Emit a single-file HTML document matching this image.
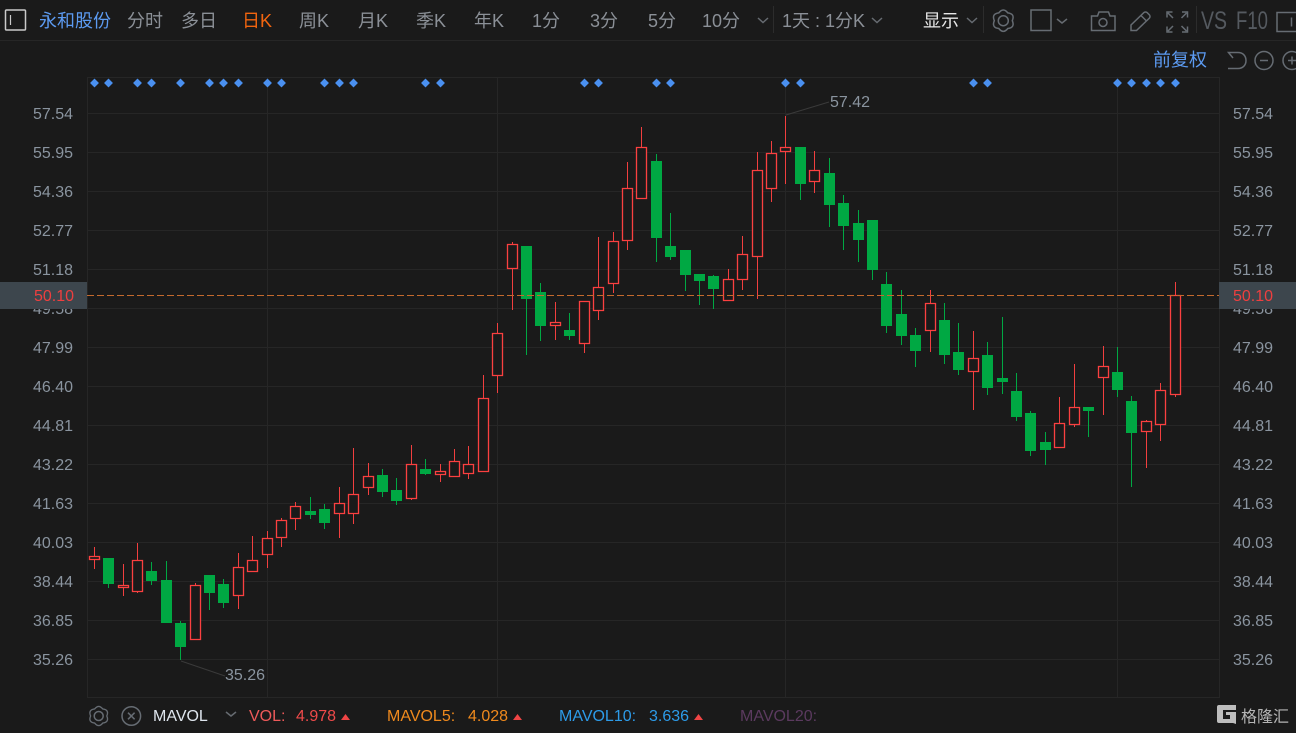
<!DOCTYPE html>
<html lang="zh"><head><meta charset="utf-8"><title>永和股份</title>
<style>
html,body{margin:0;padding:0;background:#1a1a1a;width:1296px;height:733px;overflow:hidden}
svg{display:block;position:absolute;left:0;top:0}
text{font-family:"Liberation Sans","Noto Sans CJK SC",sans-serif}
.a text{font-size:16px;fill:#8a949f}
.t text{font-size:18px;fill:#8b9097}
.s{fill:none;stroke:#666c73;stroke-width:1.5}
</style></head><body>
<svg width="1296" height="733" viewBox="0 0 1296 733">
<rect width="1296" height="733" fill="#1a1a1a"/>
<g shape-rendering="crispEdges" stroke="#262626" fill="none">
<path d="M0 40.500H1296"/>
<path d="M87 77.500H1220M87 697.500H1220M87.500 77V698M1219.500 77V698M267.500 77V698M497.500 77V698M785.500 77V698M1117.500 77V698"/>
<path d="M87 113.500H1220M87 152.500H1220M87 191.500H1220M87 230.500H1220M87 269.500H1220M87 308.500H1220M87 347.500H1220M87 386.500H1220M87 425.500H1220M87 464.500H1220M87 503.500H1220M87 542.500H1220M87 581.500H1220M87 620.500H1220M87 659.500H1220"/>
</g>
<g class="t">
<text x="39" y="27" style="fill:#5c9bf2">永和股份</text>
<text x="127" y="27">分时</text><text x="181" y="27">多日</text>
<text x="242" y="27" style="fill:#f2650f">日K</text>
<text x="299" y="27">周K</text><text x="358" y="27">月K</text><text x="416" y="27">季K</text><text x="474" y="27">年K</text>
<text x="532" y="27">1分</text><text x="590" y="27">3分</text><text x="648" y="27">5分</text><text x="702" y="27">10分</text>
<text x="782" y="27">1天 : 1分K</text>
<text x="923" y="27" style="fill:#e6e6e6">显示</text>
<text x="1153" y="66" style="fill:#5c9bf2">前复权</text>
<text x="1201" y="29" style="fill:#555a60;font-size:25px" textLength="26" lengthAdjust="spacingAndGlyphs">VS</text>
<text x="1236" y="29" style="fill:#555a60;font-size:25px" textLength="32" lengthAdjust="spacingAndGlyphs">F10</text>
</g>
<!-- toolbar icons -->
<rect x="5.500" y="10" width="20" height="20" rx="1" fill="none" stroke="#c9c9c9" stroke-width="1.500"/>
<path d="M10.500 15V25" stroke="#c9c9c9" stroke-width="1.200"/>
<path d="M758 18l5 4.500 5-4.500M872 18l5 4.500 5-4.500M967 18l5 4.500 5-4.500M1057 19l5 4 5-4M226 712l5 4 5-4" fill="none" stroke="#666b71" stroke-width="1.500"/>
<path d="M773.500 6V33M983.500 6V33M1196.500 6V33" stroke="#2c2c2c" shape-rendering="crispEdges"/>
<path class="s" d="M998.800 12.900Q1003.300 7.200 1007.800 12.900Q1015.200 13.800 1012.300 20.700Q1015.200 27.600 1007.800 28.500Q1003.300 34.200 998.800 28.500Q991.400 27.600 994.300 20.700Q991.400 13.800 998.800 12.900Z"/>
<circle class="s" cx="1003.300" cy="20.700" r="5"/>
<rect x="1031" y="10" width="20" height="20.500" class="s"/>
<path class="s" d="M1091.500 16h6l1.500-4h9.500l1.500 4h5v14.500h-23.500z"/>
<circle class="s" cx="1103" cy="22.500" r="4"/>
<path class="s" d="M1131 25L1144 12.500q1.500-1 3 0l2.500 2.500q1 1.500 0 3L1136.500 30.500h-5.500zM1141 15.500l5.500 5.500"/>
<path class="s" d="M1167 17.500v-5.500h5.500M1182 12h5.500v5.500M1167 26.500v5.500h5.500M1182 32h5.500v-5.500M1168 13l5 5M1186.500 13l-5 5M1168 31l5-5M1186.500 31l-5-5"/>
<rect x="1277" y="12.500" width="22" height="19" class="s"/>
<path d="M1291.500 17.500v9" class="s"/>
<path class="s" d="M1233 58L1228.500 52.500H1238C1243 52.500 1246 56 1246 60.500C1246 65 1243 68.500 1238 68.500H1228"/>
<circle class="s" cx="1264" cy="60.500" r="9"/><path class="s" d="M1260 60.500h8"/>
<circle class="s" cx="1292" cy="60.500" r="9"/><path class="s" d="M1288 60.500h8M1292 56.500v8"/>
<!-- diamonds -->
<g fill="#4a90f0" stroke="#4a90f0" stroke-width=".6" stroke-linejoin="round"><path d="M94.500 79l4 4-4 4-4-4zM108.500 79l4 4-4 4-4-4zM137.500 79l4 4-4 4-4-4zM151.500 79l4 4-4 4-4-4zM180.500 79l4 4-4 4-4-4zM209.500 79l4 4-4 4-4-4zM223.500 79l4 4-4 4-4-4zM238.500 79l4 4-4 4-4-4zM267.500 79l4 4-4 4-4-4zM281.500 79l4 4-4 4-4-4zM324.500 79l4 4-4 4-4-4zM339.500 79l4 4-4 4-4-4zM353.500 79l4 4-4 4-4-4zM425.500 79l4 4-4 4-4-4zM440.500 79l4 4-4 4-4-4zM584.500 79l4 4-4 4-4-4zM598.500 79l4 4-4 4-4-4zM656.500 79l4 4-4 4-4-4zM670.500 79l4 4-4 4-4-4zM785.500 79l4 4-4 4-4-4zM800.500 79l4 4-4 4-4-4zM973.500 79l4 4-4 4-4-4zM987.500 79l4 4-4 4-4-4zM1117.500 79l4 4-4 4-4-4zM1131.500 79l4 4-4 4-4-4zM1146.500 79l4 4-4 4-4-4zM1160.500 79l4 4-4 4-4-4zM1175.500 79l4 4-4 4-4-4z"/></g>
<!-- candles -->
<g shape-rendering="crispEdges">
<path stroke="#00a843" fill="none" d="M108.500 558V588M151.500 562V585M166.500 561V623M180.500 621V660M209.500 575V610M223.500 579V608M310.500 497V519M324.500 504V529M382.500 469V497M396.500 478V505M425.500 459V475M526.500 246V355M540.500 283V341M569.500 313V340M656.500 154V262M670.500 213V260M685.500 250V291M699.500 274V305M713.500 275V309M800.500 147V200M829.500 158V227M843.500 195V250M858.500 210V262M872.500 220V280M886.500 272V333M901.500 290V345M915.500 328V367M944.500 303V364M958.500 323V375M987.500 342V395M1002.500 317V394M1016.500 373V421M1030.500 411V456M1045.500 432V465M1088.500 407V437M1117.500 347V397M1131.500 396V487"/>
<path fill="#00a843" d="M103 558h11v26h-11zM146 571h11v10h-11zM161 580h11v43h-11zM175 623h11v24h-11zM204 575h11v18h-11zM218 584h11v19h-11zM305 511h11v4h-11zM319 509h11v14h-11zM377 475h11v17h-11zM391 490h11v11h-11zM420 469h11v5h-11zM521 246h11v53h-11zM535 292h11v34h-11zM564 330h11v6h-11zM651 161h11v77h-11zM665 246h11v11h-11zM680 250h11v25h-11zM694 274h11v7h-11zM708 276h11v13h-11zM795 147h11v37h-11zM824 173h11v32h-11zM838 203h11v23h-11zM853 223h11v17h-11zM867 220h11v50h-11zM881 284h11v42h-11zM896 314h11v22h-11zM910 335h11v16h-11zM939 320h11v35h-11zM953 352h11v18h-11zM982 355h11v33h-11zM997 378h11v4h-11zM1011 391h11v26h-11zM1025 413h11v38h-11zM1040 442h11v8h-11zM1083 407h11v4h-11zM1112 372h11v18h-11zM1126 401h11v32h-11z"/>
<path stroke="#f23f3f" fill="none" d="M94.500 547V569M123.500 564V596M137.500 543V593M195.500 583V640M238.500 553V609M252.500 536V572M267.500 531V568M281.500 518V547M295.500 502V530M339.500 487V538M353.500 448V524M368.500 463V495M411.500 445V500M440.500 464V482M454.500 449V477M468.500 446V479M483.500 375V472M497.500 323V393M512.500 242V310M555.500 302V340M584.500 301V353M598.500 237V320M613.500 232V293M627.500 162V250M641.500 127V199M728.500 269V301M742.500 236V290M757.500 152V299M771.500 141V202M785.500 116V184M814.500 151V193M930.500 290V352M973.500 331V410M1059.500 397V448M1074.500 364V427M1103.500 346V415M1146.500 420V468M1160.500 383V441M1175.500 282V397"/>
</g>
<path stroke="#fb4040" stroke-width="1.300" fill="#1a1a1a" d="M89.500 556.500h10V559.500h-10zM118.500 585.500h10V587.500h-10zM132.500 560.500h10V591.500h-10zM190.500 585.500h10V639.500h-10zM233.500 567.500h10V595.500h-10zM247.500 560.500h10V571.500h-10zM262.500 538.500h10V554.500h-10zM276.500 520.500h10V537.500h-10zM290.500 506.500h10V518.500h-10zM334.500 503.500h10V513.500h-10zM348.500 494.500h10V513.500h-10zM363.500 476.500h10V487.500h-10zM406.500 464.500h10V498.500h-10zM435.500 471.500h10V474.500h-10zM449.500 461.500h10V476.500h-10zM463.500 464.500h10V473.500h-10zM478.500 398.500h10V471.500h-10zM492.500 333.500h10V375.500h-10zM507.500 244.500h10V268.500h-10zM550.500 322.500h10V325.500h-10zM579.500 301.500h10V343.500h-10zM593.500 287.500h10V310.500h-10zM608.500 241.500h10V283.500h-10zM622.500 188.500h10V240.500h-10zM636.500 147.500h10V198.500h-10zM723.500 279.500h10V300.500h-10zM737.500 254.500h10V279.500h-10zM752.500 170.500h10V256.500h-10zM766.500 153.500h10V188.500h-10zM780.500 147.500h10V151.500h-10zM809.500 170.500h10V181.500h-10zM925.500 303.500h10V330.500h-10zM968.500 358.500h10V371.500h-10zM1054.500 423.500h10V447.500h-10zM1069.500 407.500h10V424.500h-10zM1098.500 366.500h10V377.500h-10zM1141.500 421.500h10V431.500h-10zM1155.500 390.500h10V424.500h-10zM1170.500 295.500h10V394.500h-10z"/>
<!-- leader lines -->
<path d="M181 661L225 676M786 115L829 102" stroke="#3a3a3a" fill="none"/>
<g class="a">
<text x="225" y="680">35.26</text><text x="830" y="107">57.42</text>
<text x="33" y="119">57.54</text><text x="33" y="158">55.95</text><text x="33" y="197">54.36</text><text x="33" y="236">52.77</text><text x="33" y="275">51.18</text><text x="33" y="314">49.58</text><text x="33" y="353">47.99</text><text x="33" y="392">46.40</text><text x="33" y="431">44.81</text><text x="33" y="470">43.22</text><text x="33" y="509">41.63</text><text x="33" y="548">40.03</text><text x="33" y="587">38.44</text><text x="33" y="626">36.85</text><text x="33" y="665">35.26</text>
<text x="1233" y="119">57.54</text><text x="1233" y="158">55.95</text><text x="1233" y="197">54.36</text><text x="1233" y="236">52.77</text><text x="1233" y="275">51.18</text><text x="1233" y="314">49.58</text><text x="1233" y="353">47.99</text><text x="1233" y="392">46.40</text><text x="1233" y="431">44.81</text><text x="1233" y="470">43.22</text><text x="1233" y="509">41.63</text><text x="1233" y="548">40.03</text><text x="1233" y="587">38.44</text><text x="1233" y="626">36.85</text><text x="1233" y="665">35.26</text>
</g>
<!-- price line and tags -->
<path d="M87 295.500H1219" stroke="#c4692d" stroke-dasharray="7 3" shape-rendering="crispEdges"/>
<rect x="0" y="282" width="87" height="27" fill="#3d464d"/>
<rect x="1219" y="282" width="77" height="27" fill="#3d464d"/>
<g class="a"><text x="34" y="301" style="fill:#ee3f3f">50.10</text><text x="1233" y="301" style="fill:#ee3f3f">50.10</text></g>
<!-- bottom bar -->
<path class="s" transform="translate(98.700 716) scale(.9) translate(-1003.300 -20.700)" d="M998.800 12.900Q1003.300 7.200 1007.800 12.900Q1015.200 13.800 1012.300 20.700Q1015.200 27.600 1007.800 28.500Q1003.300 34.200 998.800 28.500Q991.400 27.600 994.300 20.700Q991.400 13.800 998.800 12.900Z"/>
<circle class="s" cx="98.700" cy="716" r="4.500"/>
<circle class="s" cx="131.300" cy="716" r="9.300"/>
<path d="M128 712.700l6.600 6.600M134.600 712.700l-6.600 6.600" class="s"/>
<g>
<text x="153" y="721" fill="#dfe6ee" style="font-size:16px">MAVOL</text>
<text x="249" y="721" fill="#ee5a5a" style="font-size:16px">VOL:</text>
<text x="296" y="721" fill="#ee4a4a" style="font-size:16px">4.978</text>
<text x="387" y="721" fill="#f08a1d" style="font-size:16px">MAVOL5:</text>
<text x="468" y="721" fill="#f08a1d" style="font-size:16px">4.028</text>
<text x="559" y="721" fill="#2d9be8" style="font-size:16px">MAVOL10:</text>
<text x="649" y="721" fill="#2d9be8" style="font-size:16px">3.636</text>
<text x="740" y="721" fill="#5b3a5f" style="font-size:16px">MAVOL20:</text>
</g>
<path fill="#f04545" d="M345.500 714l4.500 6h-9zM517.500 714l4.500 6h-9zM698.500 714l4.500 6h-9z"/>
<!-- logo -->
<path fill="#bdbdbd" fill-rule="evenodd" d="M1219 705h17v5h-13v9h7v-4h-4v-3h10v12l-3-1h-14a2 2 0 0 1-2-2v-14a2 2 0 0 1 2-2z"/>
<text x="1241" y="722" fill="#b5b5b5" style="font-size:16px">格隆汇</text>
</svg>
</body></html>
